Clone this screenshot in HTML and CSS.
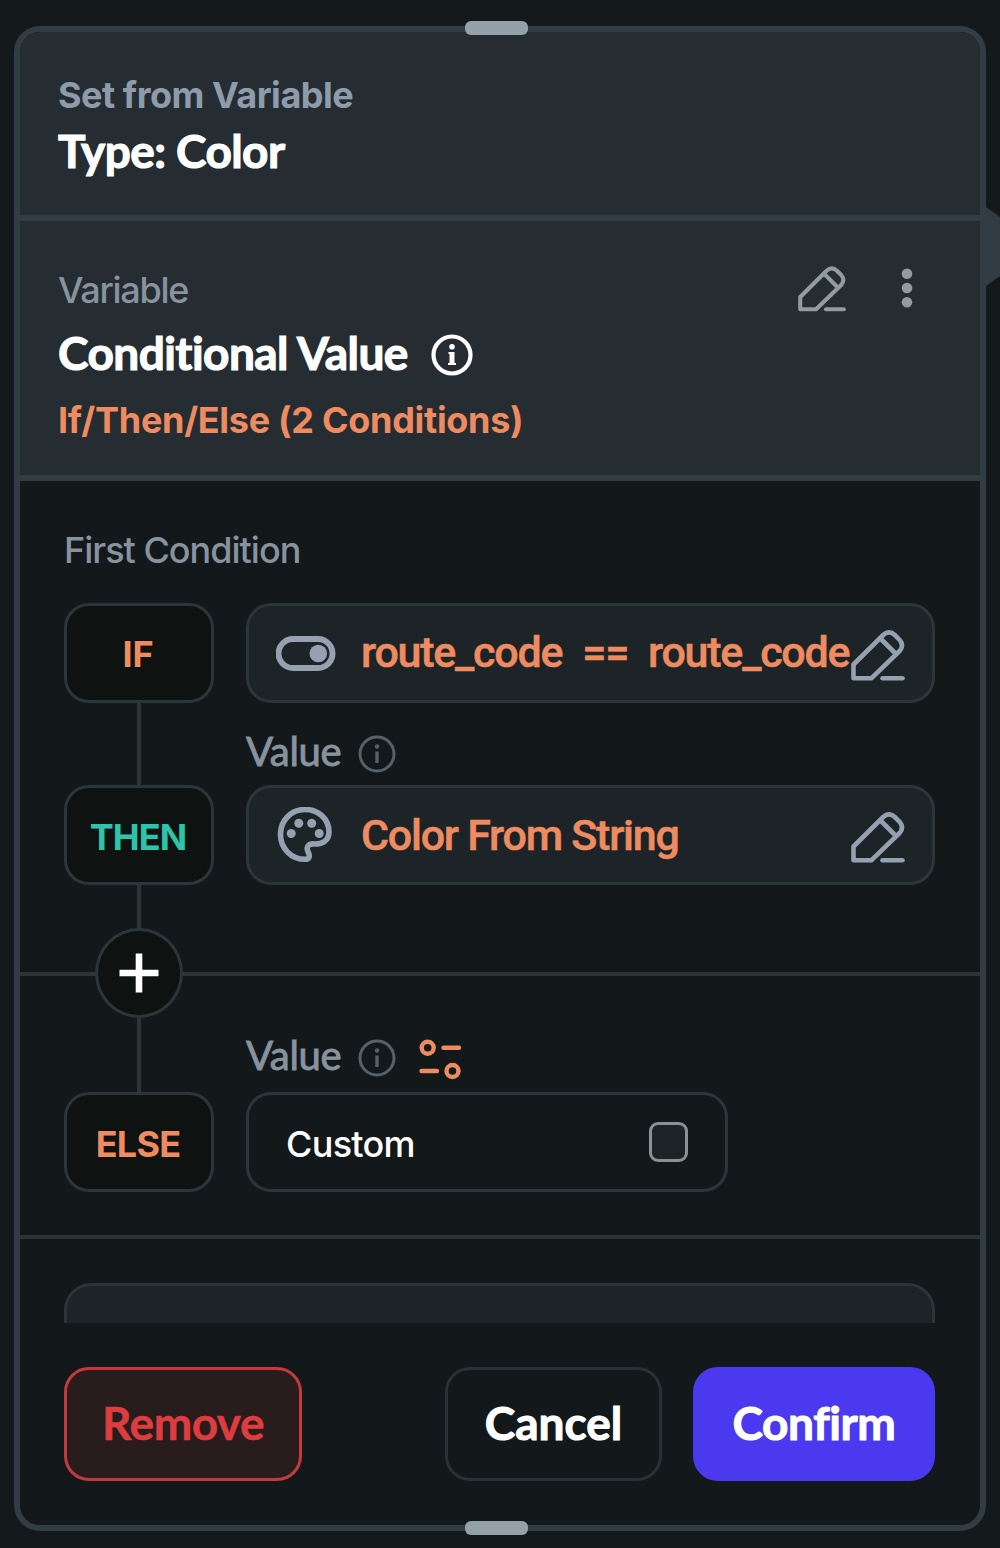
FILE: index.html
```html
<!DOCTYPE html>
<html lang="en">
<head>
<meta charset="utf-8">
<title>Set from Variable</title>
<link rel="stylesheet" href="styles.css">
</head>
<body>
<svg class="defs" aria-hidden="true">
  <symbol id="pencil" viewBox="0 0 54 51">
    <g fill="none" stroke="currentColor" stroke-width="4.6" stroke-linejoin="round" stroke-linecap="round">
      <path d="M2.5 48.3V34.5L32.2 5Q38 -.2 43.8 5L48.6 9.8Q53.4 15.5 48.6 21L20.3 48.3Z"/>
      <path d="M29.5 8.500L44.500 23.500"/>
      <path d="M31.500 48.300H51.500"/>
    </g>
  </symbol>
  <symbol id="info" viewBox="0 0 38 38">
    <circle cx="19" cy="19" r="17" fill="none" stroke="currentColor" stroke-width="3"/>
    <circle cx="19" cy="11.500" r="2.200" fill="currentColor"/>
    <path d="M19 16.500V28" fill="none" stroke="currentColor" stroke-width="3.400"/>
  </symbol>
</svg>

<main class="panel">
  <span class="handle handle-top"></span>
  <span class="handle handle-bottom"></span>
  <span class="arrow"></span>

  <header class="head">
    <p class="eyebrow">Set from Variable</p>
    <h1 class="title type">Type: Color</h1>
  </header>

  <section class="variable">
    <div>
      <p class="label">Variable</p>
      <h2 class="title cond">Conditional Value
        <svg class="title-info" viewBox="0 0 42 42"><circle cx="21" cy="21" r="18.500" fill="none" stroke="currentColor" stroke-width="4.200"/><circle cx="21" cy="12.800" r="2.800" fill="currentColor"/><path d="M17.500 19H21M17 30H25" fill="none" stroke="currentColor" stroke-width="2"/><path d="M21 18V31" fill="none" stroke="currentColor" stroke-width="5"/></svg>
      </h2>
      <p class="summary">If/Then/Else (2 Conditions)</p>
    </div>
    <div class="actions">
      <svg class="edit"><use href="#pencil"/></svg>
      <svg class="more" viewBox="0 0 12 40" fill="currentColor"><circle cx="6" cy="5.700" r="5.300"/><circle cx="6" cy="20" r="5.300"/><circle cx="6" cy="34.300" r="5.300"/></svg>
    </div>
  </section>

  <section class="block">
    <h3 class="label first">First Condition</h3>
    <div class="grid">
      <div class="badge if">IF</div>
      <div class="field">
        <svg class="kind" viewBox="0 0 60 56"><rect x="2.500" y="14" width="54" height="29" rx="14.500" fill="none" stroke="currentColor" stroke-width="6"/><circle cx="42.300" cy="28.500" r="8.800" fill="currentColor"/></svg>
        <span class="expr"><span>route_code</span><span class="op">==</span><span>route_code</span></span>
        <svg class="edit"><use href="#pencil"/></svg>
      </div>

      <div class="stem"></div>
      <div class="value-row"><span class="value">Value</span><svg class="info"><use href="#info"/></svg></div>

      <div class="badge then">THEN</div>
      <div class="field">
        <svg class="kind" viewBox="0 0 60 56"><path d="M29 2.500C15 2.500 4.500 13.500 4.500 27.500S15.500 52.300 29 52.300C33.500 52.300 34.300 49 32.300 45.300C29.500 40 32.500 36.700 37.500 36.900C47 37.500 53 33 53 25C53 12 42.500 2.500 29 2.500Z" fill="none" stroke="currentColor" stroke-width="5.600"/><g fill="currentColor"><circle cx="15.200" cy="26.500" r="4.500"/><circle cx="22.800" cy="16.300" r="4.500"/><circle cx="35.700" cy="16.300" r="4.500"/><circle cx="43.200" cy="26.500" r="4.500"/></g></svg>
        <span class="expr color">Color From String</span>
        <svg class="edit"><use href="#pencil"/></svg>
      </div>

      <div class="stem tail"></div>
    </div>
    <button class="add" aria-label="Add condition"><svg viewBox="0 0 40 40"><path d="M20 .500V39.500M.500 20H39.500" stroke="currentColor" stroke-width="6.600"/></svg></button>
  </section>

  <section class="block else-block">
    <div class="grid">
      <div class="stem"></div>
      <div class="value-row">
        <span class="value">Value</span><svg class="info"><use href="#info"/></svg>
        <svg class="sliders" viewBox="0 0 43 41" fill="none" stroke="currentColor" stroke-width="4.400"><circle cx="8.700" cy="8.700" r="6"/><circle cx="33.500" cy="32" r="6"/><path d="M24.500 8.700H40M2.500 32H18" stroke-linecap="round"/></svg>
      </div>
      <div class="badge else">ELSE</div>
      <div class="field custom"><span>Custom</span><i class="swatch"></i></div>
    </div>
  </section>

  <div class="next"></div>

  <footer class="buttons">
    <button class="btn remove">Remove</button>
    <button class="btn cancel">Cancel</button>
    <button class="btn confirm">Confirm</button>
  </footer>
</main>
</body>
</html>
```
FILE: styles.css
```css
* { box-sizing: border-box; margin: 0; padding: 0; }
html { background: #14191b; }
body {
  height: 1548px;
  padding: 26px 14px 0;
  overflow: hidden;
  background: #14191b;
  font-family: Lato, "Liberation Sans", sans-serif;
  -webkit-font-smoothing: antialiased;
}
svg { display: block; flex: none; }
button { font: inherit; }
.defs { position: absolute; width: 0; height: 0; }

.panel {
  position: relative;
  width: 972px;
  height: 1505px;
  border: 6px solid #323c43;
  border-radius: 26px;
  background: #13181b;
}
.handle {
  position: absolute;
  left: 445px;
  width: 63px;
  height: 14px;
  border-radius: 6px;
  background: #95a1a9;
}
.handle-top { top: -11px; }
.handle-bottom { bottom: -10px; }
.arrow {
  position: absolute;
  left: 966px;
  top: 175px;
  width: 14px;
  height: 79px;
  background: #323c45;
  clip-path: polygon(0 0, 100% 10px, 100% 69px, 0 100%);
}

.head, .variable { background: #252d33; border-bottom: 6px solid #323c43; }
.head { height: 189px; padding: 43px 38px 0; border-radius: 20px 20px 0 0; }
.eyebrow, .label, .summary {
  font-family: Inter, "Liberation Sans", sans-serif;
  font-size: 36px;
  line-height: 40px;
  white-space: nowrap;
}
.eyebrow { color: #8e9baa; font-weight: 650; letter-spacing: -.48px; }
.title {
  font-size: 46px;
  line-height: 56px;
  font-weight: 700;
  color: #fff;
  white-space: nowrap;
  -webkit-text-stroke: 1.1px;
}
.type { margin-top: 8px; letter-spacing: -.6px; }
.variable { display: flex; justify-content: space-between; height: 260px; padding: 45px 67px 0 38px; }
.label { margin-top: 4px; color: #87939f; font-weight: 500; letter-spacing: -1.3px; }
.cond { display: flex; align-items: center; gap: 23px; margin-top: 15px; letter-spacing: -.55px; }
.title-info { width: 42px; height: 42px; margin-top: 4px; }
.summary { margin-top: 19px; color: #ee8b60; font-weight: 650; letter-spacing: -.3px; }
.actions { display: flex; gap: 55px; color: #929b9f; }
.actions .edit { width: 48px; height: 46px; }
.more { width: 12px; height: 40px; margin-top: 2px; }

.block { position: relative; border-bottom: 4px solid #2c3438; padding: 0 45px 0 44px; }
.first { margin: 0; padding: 49px 0 33px; letter-spacing: -1px; }
.grid { display: grid; grid-template-columns: 150px minmax(0, 1fr); column-gap: 32px; }
.badge, .field { height: 100px; border: 3px solid #2c353a; border-radius: 25px; display: flex; align-items: center; }
.badge {
  justify-content: center;
  padding-right: 2px;
  background: #0e1211;
  color: #ee8b60;
  font: 650 36px Inter, "Liberation Sans", sans-serif;
  letter-spacing: -.8px;
}
.if { padding-top: 2px; letter-spacing: 0; }
.then { padding-top: 3px; color: #2dc4aa; letter-spacing: -.9px; }
.else { padding-top: 3px; }
.field { padding: 0 27px; background: #1d2427; color: #95a1b0; }
.kind { width: 60px; height: 56px; }
.field .edit { width: 54px; height: 51px; margin-top: 5px; margin-left: auto; }
.expr {
  display: flex;
  gap: 20px;
  margin: -2px 0 0 25px;
  color: #ee8b60;
  font: 500 43px Roboto, "Liberation Sans", sans-serif;
  letter-spacing: -1.25px;
  white-space: nowrap;
  -webkit-text-stroke: .5px;
}
.color { margin-top: 0; }
.stem { justify-self: center; width: 4px; height: 82px; background: #2c3438; }
.tail { height: 87px; }
.value-row { display: flex; align-items: center; height: 44px; margin-top: 26px; }
.value { width: 112px; font-size: 40px; color: #87939f; letter-spacing: -.3px; -webkit-text-stroke: .9px; }
.info { width: 38px; height: 38px; margin-top: 5px; color: #566167; }
.add {
  position: absolute;
  left: 75px;
  bottom: -46px;
  z-index: 1;
  display: grid;
  place-items: center;
  width: 88px;
  height: 90px;
  border: 3px solid #2c353a;
  border-radius: 50%;
  background: #0e1211;
  color: #fff;
}
.add svg { width: 40px; height: 40px; }
.else-block { height: 263px; }
.else-block .stem { height: 116px; }
.else-block .value-row { margin-top: 57px; }
.sliders { width: 43px; height: 41px; margin: 8px 0 0 23px; color: #ee8b60; }
.custom {
  justify-content: space-between;
  width: 482px;
  padding: 0 37px;
  background: #13181b;
  color: #fff;
  font: 550 36px Inter, "Liberation Sans", sans-serif;
  letter-spacing: -.7px;
}
.custom span { margin-top: 3px; }
.swatch { width: 39px; height: 40px; border: 3.5px solid #8b9193; border-radius: 9px; background: #1d2427; }

.next {
  height: 40px;
  margin: 44px 45px 44px 44px;
  border: 3px solid #2c3438;
  border-bottom: 0;
  border-radius: 27px 27px 0 0;
  background: #1d2427;
}
.buttons { display: flex; gap: 31px; padding: 0 45px 0 44px; }
.btn {
  height: 114px;
  padding-bottom: 4px;
  border: 3px solid #2a3034;
  border-radius: 25px;
  background: transparent;
  color: #fff;
  font-size: 46px;
  font-weight: 700;
  -webkit-text-stroke: 1px;
}
.remove {
  width: 238px;
  margin-right: auto;
  border: 3.5px solid #c43a3c;
  background: #291c1d;
  color: #dd3d3f;
  letter-spacing: -.5px;
  -webkit-text-stroke: .5px;
}
.cancel { width: 217px; }
.confirm { width: 242px; border-color: #4b39ef; background: #4b39ef; letter-spacing: -.4px; }
```
